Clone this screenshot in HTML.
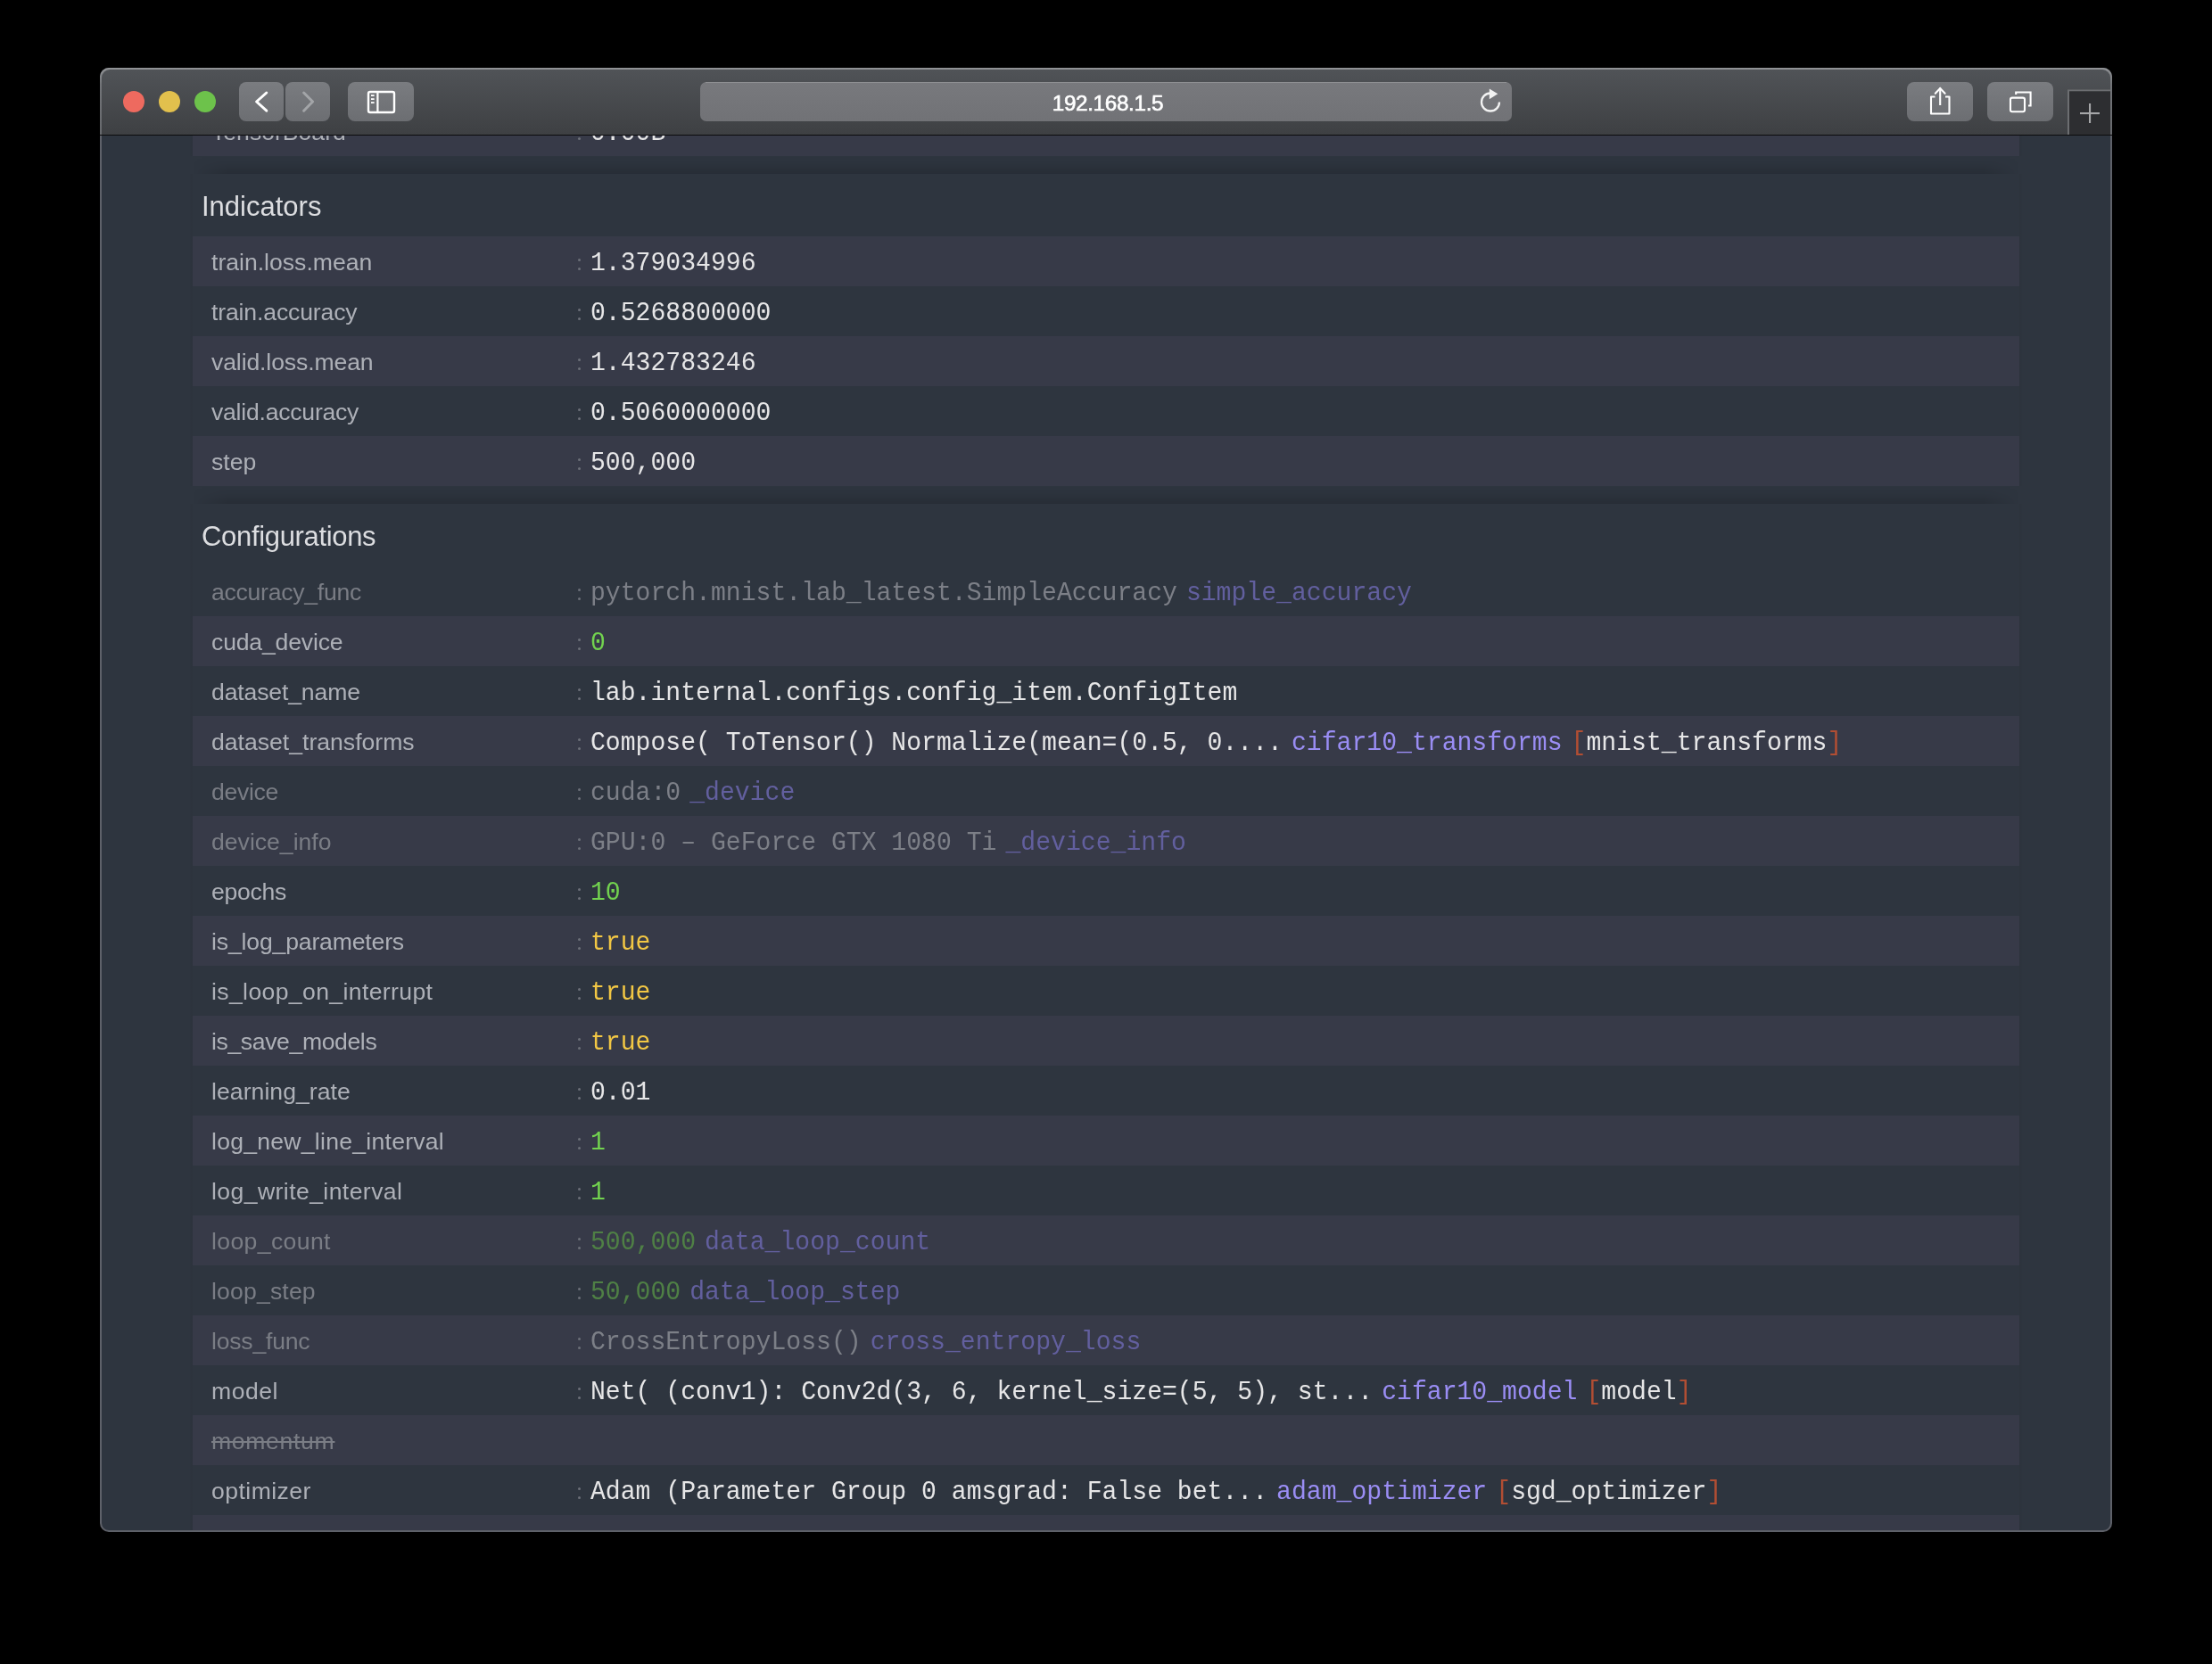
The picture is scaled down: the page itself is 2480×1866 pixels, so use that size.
<!DOCTYPE html>
<html><head><meta charset="utf-8"><style>
*{margin:0;padding:0;box-sizing:border-box}
html,body{width:2480px;height:1866px;background:#000;overflow:hidden}
body{position:relative;font-family:"Liberation Sans",sans-serif}
.lb,.vl,.hd,#tbsvg{will-change:transform}
#win{position:absolute;left:112px;top:76px;width:2256px;height:1642px;border-radius:10px;overflow:hidden;background:#5e6169}
#content{position:absolute;left:114px;top:152px;width:2252px;height:1564px;background:#2e353f;overflow:hidden;border-radius:0 0 8px 8px}
.rb{position:absolute;left:102px;width:2048px;height:56px;background:#373a48}
.lb{position:absolute;left:123px;height:0;line-height:0;font-size:26.6px;white-space:pre;margin-top:-9.22px}
.lab{color:#adb0b7} .labdim{color:#7a7d85} .strike{color:#7a7d85;text-decoration:line-through}
.cl{position:absolute;left:534px;width:4px;height:56px}
.cl i{position:absolute;left:0;width:3px;height:3px;border-radius:1.5px;background:#6c7079}
.cl i:first-child{top:25px} .cl i:last-child{top:35px}
.vl{position:absolute;left:548.3px;height:0;line-height:0;font-family:"Liberation Mono",monospace;font-size:28.11px;white-space:pre;margin-top:-7.48px;transform:scaleY(1.08);transform-origin:0 7.48px}
.w{color:#e6e6e7} .g{color:#7c7f87} .gr{color:#72d24f} .grd{color:#4f8045} .y{color:#f2c744}
.p{color:#9a8df4} .pd{color:#625f9e} .o{color:#b24e33}
.hd{position:absolute;left:111.5px;height:0;line-height:0;font-size:31px;color:#dcdde0;margin-top:-10.74px}
.sdl{position:absolute;left:98px;width:4px;background:linear-gradient(to right,rgba(0,0,0,0),rgba(0,0,0,0.05))}
.sdr{position:absolute;left:2150px;width:4px;background:linear-gradient(to left,rgba(0,0,0,0),rgba(0,0,0,0.05))}
.sh{position:absolute;left:102px;width:2048px;height:20px;background:linear-gradient(rgba(0,0,0,0) 0%,rgba(0,0,0,0.03) 40%,rgba(0,0,0,0.14) 100%);-webkit-mask-image:linear-gradient(to right,transparent 0,#000 40px,#000 2008px,transparent 2048px)}
</style></head>
<body>
<div id="win"></div>
<div id="content"><div class="rb" style="top:-33px"></div><div class="lb lab" style="top:5px">TensorBoard</div><div class="cl" style="top:-33px"><i></i><i></i></div><div class="vl" style="top:5.5px"><span class="w">0.00B</span></div><div class="sdl" style="top:0px;height:23px"></div><div class="sdr" style="top:0px;height:23px"></div><div class="sdl" style="top:43px;height:350px"></div><div class="sdr" style="top:43px;height:350px"></div><div class="sdl" style="top:413px;height:1200px"></div><div class="sdr" style="top:413px;height:1200px"></div><div class="sh" style="top:23px"></div><div class="hd" style="top:91px">Indicators</div><div class="rb" style="top:113px"></div><div class="lb lab" style="top:151px">train.loss.mean</div><div class="cl" style="top:113px"><i></i><i></i></div><div class="vl" style="top:151.5px"><span class="w">1.379034996</span></div><div class="lb lab" style="top:207px;letter-spacing:-0.146px">train.accuracy</div><div class="cl" style="top:169px"><i></i><i></i></div><div class="vl" style="top:207.5px"><span class="w">0.5268800000</span></div><div class="rb" style="top:225px"></div><div class="lb lab" style="top:263px;letter-spacing:-0.121px">valid.loss.mean</div><div class="cl" style="top:225px"><i></i><i></i></div><div class="vl" style="top:263.5px"><span class="w">1.432783246</span></div><div class="lb lab" style="top:319px;letter-spacing:-0.238px">valid.accuracy</div><div class="cl" style="top:281px"><i></i><i></i></div><div class="vl" style="top:319.5px"><span class="w">0.5060000000</span></div><div class="rb" style="top:337px"></div><div class="lb lab" style="top:375px">step</div><div class="cl" style="top:337px"><i></i><i></i></div><div class="vl" style="top:375.5px"><span class="w">500,000</span></div><div class="sh" style="top:393px"></div><div class="hd" style="top:461px;letter-spacing:-0.33px">Configurations</div><div class="lb labdim" style="top:521px;letter-spacing:-0.267px">accuracy_func</div><div class="cl" style="top:483px"><i></i><i></i></div><div class="vl" style="top:521.5px"><span class="g">pytorch.mnist.lab_latest.SimpleAccuracy</span><span class="pd" style="margin-left:10px">simple_accuracy</span></div><div class="rb" style="top:539px"></div><div class="lb lab" style="top:577px;letter-spacing:-0.170px">cuda_device</div><div class="cl" style="top:539px"><i></i><i></i></div><div class="vl" style="top:577.5px"><span class="gr">0</span></div><div class="lb lab" style="top:633px;letter-spacing:-0.145px">dataset_name</div><div class="cl" style="top:595px"><i></i><i></i></div><div class="vl" style="top:633.5px"><span class="w">lab.internal.configs.config_item.ConfigItem</span></div><div class="rb" style="top:651px"></div><div class="lb lab" style="top:689px">dataset_transforms</div><div class="cl" style="top:651px"><i></i><i></i></div><div class="vl" style="top:689.5px"><span class="w">Compose( ToTensor() Normalize(mean=(0.5, 0....</span><span class="p" style="margin-left:10px">cifar10_transforms</span><span class="o" style="margin-left:10px">[</span><span class="w">mnist_transforms</span><span class="o">]</span></div><div class="lb labdim" style="top:745px;letter-spacing:-0.320px">device</div><div class="cl" style="top:707px"><i></i><i></i></div><div class="vl" style="top:745.5px"><span class="g">cuda:0</span><span class="pd" style="margin-left:10px">_device</span></div><div class="rb" style="top:763px"></div><div class="lb labdim" style="top:801px">device_info</div><div class="cl" style="top:763px"><i></i><i></i></div><div class="vl" style="top:801.5px"><span class="g">GPU:0 – GeForce GTX 1080 Ti</span><span class="pd" style="margin-left:10px">_device_info</span></div><div class="lb lab" style="top:857px;letter-spacing:-0.300px">epochs</div><div class="cl" style="top:819px"><i></i><i></i></div><div class="vl" style="top:857.5px"><span class="gr">10</span></div><div class="rb" style="top:875px"></div><div class="lb lab" style="top:913px;letter-spacing:-0.163px">is_log_parameters</div><div class="cl" style="top:875px"><i></i><i></i></div><div class="vl" style="top:913.5px"><span class="y">true</span></div><div class="lb lab" style="top:969px;letter-spacing:0.368px">is_loop_on_interrupt</div><div class="cl" style="top:931px"><i></i><i></i></div><div class="vl" style="top:969.5px"><span class="y">true</span></div><div class="rb" style="top:987px"></div><div class="lb lab" style="top:1025px;letter-spacing:-0.385px">is_save_models</div><div class="cl" style="top:987px"><i></i><i></i></div><div class="vl" style="top:1025.5px"><span class="y">true</span></div><div class="lb lab" style="top:1081px;letter-spacing:0.050px">learning_rate</div><div class="cl" style="top:1043px"><i></i><i></i></div><div class="vl" style="top:1081.5px"><span class="w">0.01</span></div><div class="rb" style="top:1099px"></div><div class="lb lab" style="top:1137px;letter-spacing:0.250px">log_new_line_interval</div><div class="cl" style="top:1099px"><i></i><i></i></div><div class="vl" style="top:1137.5px"><span class="gr">1</span></div><div class="lb lab" style="top:1193px;letter-spacing:0.412px">log_write_interval</div><div class="cl" style="top:1155px"><i></i><i></i></div><div class="vl" style="top:1193.5px"><span class="gr">1</span></div><div class="rb" style="top:1211px"></div><div class="lb labdim" style="top:1249px;letter-spacing:0.367px">loop_count</div><div class="cl" style="top:1211px"><i></i><i></i></div><div class="vl" style="top:1249.5px"><span class="grd">500,000</span><span class="pd" style="margin-left:10px">data_loop_count</span></div><div class="lb labdim" style="top:1305px;letter-spacing:0.163px">loop_step</div><div class="cl" style="top:1267px"><i></i><i></i></div><div class="vl" style="top:1305.5px"><span class="grd">50,000</span><span class="pd" style="margin-left:10px">data_loop_step</span></div><div class="rb" style="top:1323px"></div><div class="lb labdim" style="top:1361px;letter-spacing:-0.212px">loss_func</div><div class="cl" style="top:1323px"><i></i><i></i></div><div class="vl" style="top:1361.5px"><span class="g">CrossEntropyLoss()</span><span class="pd" style="margin-left:10px">cross_entropy_loss</span></div><div class="lb lab" style="top:1417px;letter-spacing:0.500px">model</div><div class="cl" style="top:1379px"><i></i><i></i></div><div class="vl" style="top:1417.5px"><span class="w">Net( (conv1): Conv2d(3, 6, kernel_size=(5, 5), st...</span><span class="p" style="margin-left:10px">cifar10_model</span><span class="o" style="margin-left:10px">[</span><span class="w">model</span><span class="o">]</span></div><div class="rb" style="top:1435px"></div><div class="lb strike" style="top:1473px;letter-spacing:0.671px">momentum</div><div class="lb lab" style="top:1529px;letter-spacing:0.438px">optimizer</div><div class="cl" style="top:1491px"><i></i><i></i></div><div class="vl" style="top:1529.5px"><span class="w">Adam (Parameter Group 0 amsgrad: False bet...</span><span class="p" style="margin-left:10px">adam_optimizer</span><span class="o" style="margin-left:10px">[</span><span class="w">sgd_optimizer</span><span class="o">]</span></div><div class="rb" style="top:1547px"></div><div class="lb lab" style="top:1585px">save_models</div><div class="cl" style="top:1547px"><i></i><i></i></div><div class="vl" style="top:1585.5px"><span class="gr">1</span></div></div>

<svg id="tbsvg" width="2480" height="160" viewBox="0 0 2480 160" style="position:absolute;left:0;top:0">
<defs>
<linearGradient id="tbg" x1="0" y1="0" x2="0" y2="1"><stop offset="0" stop-color="#505357"/><stop offset="1" stop-color="#3e4043"/></linearGradient>
<linearGradient id="tbb" x1="0" y1="0" x2="0" y2="1"><stop offset="0" stop-color="#919396"/><stop offset="0.25" stop-color="#727478"/><stop offset="1" stop-color="#67696d"/></linearGradient>
<linearGradient id="btn" x1="0" y1="0" x2="0" y2="1"><stop offset="0" stop-color="#7a7c80"/><stop offset="1" stop-color="#6c6e72"/></linearGradient>
<linearGradient id="url" x1="0" y1="0" x2="0" y2="1"><stop offset="0" stop-color="#78797d"/><stop offset="1" stop-color="#717276"/></linearGradient>
</defs>
<path d="M112,152 V86 A10,10 0 0 1 122,76 H2358 A10,10 0 0 1 2368,86 V152 Z" fill="url(#tbb)"/>
<path d="M114,151 V87 A9,9 0 0 1 123,78 H2357 A9,9 0 0 1 2366,87 V151 Z" fill="url(#tbg)"/>
<rect x="112" y="151" width="2256" height="1" fill="#0b0b0c"/>
<circle cx="150" cy="114" r="12" fill="#ee6a5f"/>
<circle cx="190" cy="114" r="12" fill="#e2c04d"/>
<circle cx="230" cy="114" r="12" fill="#6dc24b"/>
<rect x="268" y="92" width="50" height="44" rx="8" fill="url(#btn)"/>
<rect x="320" y="92" width="50" height="44" rx="8" fill="url(#btn)"/>
<path d="M298.8,104 L287.6,114 L298.8,124.2" fill="none" stroke="#ffffff" stroke-width="3" stroke-linecap="round" stroke-linejoin="round"/>
<path d="M340.6,104 L350.6,114 L340.6,124.2" fill="none" stroke="#a3a5a8" stroke-width="3" stroke-linecap="round" stroke-linejoin="round"/>
<rect x="390" y="92" width="74" height="44" rx="8" fill="url(#btn)"/>
<rect x="413" y="103" width="29" height="23" rx="2" fill="none" stroke="#ffffff" stroke-width="2.4"/>
<rect x="422.3" y="103" width="2.2" height="23" fill="#ffffff"/>
<rect x="416" y="106.2" width="3.6" height="1.8" fill="#ffffff"/>
<rect x="416" y="110.2" width="3.6" height="1.8" fill="#ffffff"/>
<rect x="416" y="114.2" width="3.6" height="1.8" fill="#ffffff"/>
<rect x="785" y="92" width="910" height="44" rx="7" fill="url(#url)"/>
<rect x="791" y="92" width="898" height="1" fill="#8e8f92"/>
<text x="1242" y="124.3" text-anchor="middle" font-family="Liberation Sans" font-size="24.3" letter-spacing="-0.35" fill="#ffffff" stroke="#ffffff" stroke-width="0.6">192.168.1.5</text>
<path d="M1681,114.5 A10,10 0 1 1 1671,104.5" fill="none" stroke="#f2f2f2" stroke-width="2.3"/>
<path d="M1669.8,99.5 L1679.3,105.3 L1669.8,111.2 Z" fill="#f2f2f2"/>
<rect x="2138" y="92" width="74" height="44" rx="8" fill="url(#btn)"/>
<path d="M2169.5,108.5 H2165 V127.5 H2185.5 V108.5 H2181" fill="none" stroke="#ffffff" stroke-width="2.1" stroke-linejoin="round"/>
<path d="M2175.2,98.5 V118" fill="none" stroke="#ffffff" stroke-width="2.1"/>
<path d="M2169.8,104.8 L2175.2,99 L2180.6,104.8" fill="none" stroke="#ffffff" stroke-width="2.1" stroke-linecap="round"/>
<rect x="2228" y="92" width="74" height="44" rx="8" fill="url(#btn)"/>
<rect x="2254" y="109.6" width="16" height="15.6" rx="2" fill="none" stroke="#ffffff" stroke-width="2.1"/>
<path d="M2260.2,106 V103.5 H2276.6 V118.5 H2274" fill="none" stroke="#ffffff" stroke-width="2.1"/>
<rect x="2318" y="100.5" width="48" height="50.5" fill="#6c6e71"/>
<rect x="2320" y="102.3" width="46" height="48.7" fill="#2d2e31"/>
<rect x="2342" y="116" width="2.1" height="22" fill="#a6a7a9"/>
<rect x="2332" y="126" width="22" height="2.1" fill="#a6a7a9"/>
</svg>

</body></html>
